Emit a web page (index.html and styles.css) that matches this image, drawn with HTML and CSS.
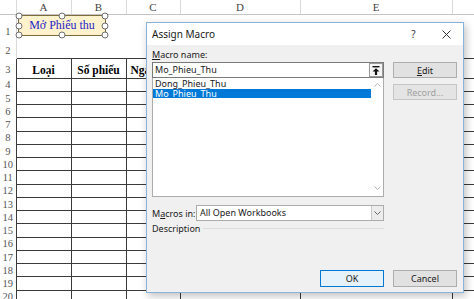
FILE: index.html
```html
<!DOCTYPE html>
<html lang="vi">
<head>
    <meta charset="UTF-8">
    <meta name="viewport" content="width=device-width, initial-scale=1.0">
    <title>Assign Macro</title>
    <link rel="stylesheet" href="styles.css">
</head>
<body>
    <div class="sheet">
        <table class="grid">
            <colgroup>
                <col class="c-rh"><col class="c-a"><col class="c-b"><col class="c-c"><col class="c-d"><col class="c-e"><col class="c-f">
            </colgroup>
            <tr class="col-head"><th></th><th>A</th><th>B</th><th>C</th><th>D</th><th>E</th><th></th></tr>
            <tr class="plain r1"><th class="rh">1</th><td></td><td></td><td></td><td></td><td></td><td></td></tr>
            <tr class="plain r2"><th class="rh">2</th><td></td><td></td><td></td><td></td><td></td><td></td></tr>
            <tr class="data r3"><th class="rh">3</th><td>Loại</td><td>Số phiếu</td><td>Ngày thu</td><td>Nội dung</td><td>Số tiền</td><td></td></tr>
            <!-- các dòng trống của bảng -->
            <tr class="data"><th class="rh">4</th><td></td><td></td><td></td><td></td><td></td><td></td></tr>
            <tr class="data"><th class="rh">5</th><td></td><td></td><td></td><td></td><td></td><td></td></tr>
            <tr class="data"><th class="rh">6</th><td></td><td></td><td></td><td></td><td></td><td></td></tr>
            <tr class="data"><th class="rh">7</th><td></td><td></td><td></td><td></td><td></td><td></td></tr>
            <tr class="data"><th class="rh">8</th><td></td><td></td><td></td><td></td><td></td><td></td></tr>
            <tr class="data"><th class="rh">9</th><td></td><td></td><td></td><td></td><td></td><td></td></tr>
            <tr class="data"><th class="rh">10</th><td></td><td></td><td></td><td></td><td></td><td></td></tr>
            <tr class="data"><th class="rh">11</th><td></td><td></td><td></td><td></td><td></td><td></td></tr>
            <tr class="data"><th class="rh">12</th><td></td><td></td><td></td><td></td><td></td><td></td></tr>
            <tr class="data"><th class="rh">13</th><td></td><td></td><td></td><td></td><td></td><td></td></tr>
            <tr class="data"><th class="rh">14</th><td></td><td></td><td></td><td></td><td></td><td></td></tr>
            <tr class="data"><th class="rh">15</th><td></td><td></td><td></td><td></td><td></td><td></td></tr>
            <tr class="data"><th class="rh">16</th><td></td><td></td><td></td><td></td><td></td><td></td></tr>
            <tr class="data"><th class="rh">17</th><td></td><td></td><td></td><td></td><td></td><td></td></tr>
            <tr class="data"><th class="rh">18</th><td></td><td></td><td></td><td></td><td></td><td></td></tr>
            <tr class="data"><th class="rh">19</th><td></td><td></td><td></td><td></td><td></td><td></td></tr>
            <tr class="data"><th class="rh">20</th><td></td><td></td><td></td><td></td><td></td><td></td></tr>
        </table>

        <!-- nút hình (shape) đang được chọn -->
        <div class="shape">
            Mở Phiếu thu
            <span class="handle h-tl"></span><span class="handle h-tc"></span><span class="handle h-tr"></span>
            <span class="handle h-ml"></span><span class="handle h-mr"></span>
            <span class="handle h-bl"></span><span class="handle h-bc"></span><span class="handle h-br"></span>
        </div>

        <div class="dialog">
            <div class="titlebar">
                <span class="title">Assign Macro</span>
                <span class="tb-btn">?</span>
                <span class="tb-btn">
                    <svg width="9" height="9" viewBox="0 0 9 9"><path d="M0.5 0.5 L8.5 8.5 M8.5 0.5 L0.5 8.5" stroke="#333" stroke-width="1" fill="none"/></svg>
                </span>
            </div>
            <div class="dlg-body">
                <div class="lbl"><u>M</u>acro name:</div>

                <div class="name-area">
                    <div class="name-box">
                        <span class="name-text">Mo_Phieu_Thu</span>
                        <span class="up-btn">
                            <svg width="8" height="9" viewBox="0 0 8 9"><rect x="0.5" y="0" width="7" height="1.4" fill="#111"/><path d="M4 2.2 L7.5 5.6 H5.1 V9 H2.9 V5.6 H0.5 Z" fill="#111"/></svg>
                        </span>
                    </div>
                    <div class="macro-list">
                        <div class="items">
                            <div class="item">Dong_Phieu_Thu</div>
                            <div class="item selected">Mo_Phieu_Thu</div>
                        </div>
                        <div class="scroll">
                            <svg width="7" height="4" viewBox="0 0 7 4"><path d="M0.5 3.5 L3.5 0.5 L6.5 3.5" stroke="#b5b5b5" fill="none"/></svg>
                            <svg width="7" height="4" viewBox="0 0 7 4"><path d="M0.5 0.5 L3.5 3.5 L6.5 0.5" stroke="#b5b5b5" fill="none"/></svg>
                        </div>
                    </div>
                </div>

                <div class="side-btns">
                    <button class="btn"><u>E</u>dit</button>
                    <button class="btn disabled">Record...</button>
                </div>

                <div class="macros-in">
                    <span class="mi-label">M<u>a</u>cros in:</span>
                    <div class="select">
                        <span class="select-text">All Open Workbooks</span>
                        <span class="drop">
                            <svg width="7" height="4" viewBox="0 0 7 4"><path d="M0.5 0.5 L3.5 3.5 L6.5 0.5" stroke="#666" fill="none"/></svg>
                        </span>
                    </div>
                </div>

                <div class="desc">Description</div>

                <button class="btn ok">OK</button>
                <button class="btn cancel">Cancel</button>
            </div>
        </div>
    </div>
</body>
</html>
```

FILE: styles.css
```css
* {
    box-sizing: border-box;
}

body {
    margin: 0;
    width: 474px;
    height: 299px;
    overflow: hidden;
    background-color: #fff;
}

.sheet {
    position: relative;
    width: 474px;
    height: 299px;
    overflow: hidden;
    font-family: "Liberation Serif", serif;
}

/* bảng tính */
.grid {
    border-collapse: collapse;
    table-layout: fixed;
    width: 482px;
}

.c-rh { width: 16px; }
.c-a { width: 55px; }
.c-b { width: 55px; }
.c-c { width: 54px; }
.c-d { width: 120px; }
.c-e { width: 152px; }
.c-f { width: 30px; }

.grid th,
.grid td {
    padding: 0;
}

.col-head th {
    height: 14px;
    font-weight: normal;
    font-size: 11px;
    color: #444;
    border-right: 1px solid #dadada;
    border-bottom: 1px solid #c4c4c4;
    line-height: 12px;
}

.rh {
    font-weight: normal;
    font-size: 10.5px;
    color: #555;
    text-align: center;
    vertical-align: bottom;
    line-height: 12px;
}

.plain .rh {
    border-right: 1px solid #dadada;
}

.data {
    height: 13.25px;
}

.r1 { height: 29px; }
.r2 { height: 15px; }
.data.r3 { height: 20px; }

.r1 .rh { padding-bottom: 5px; }
.r2 .rh { padding-bottom: 1px; }
.r3 .rh { padding-bottom: 2px; }

.data td {
    border: 1px solid #3a3a3a;
}

.r3 td {
    font-weight: bold;
    font-size: 11.5px;
    text-align: center;
    vertical-align: bottom;
    padding-bottom: 2px;
    white-space: nowrap;
    overflow: hidden;
}

/* shape */
.shape {
    position: absolute;
    left: 18px;
    top: 15px;
    width: 88px;
    height: 21px;
    background-color: #fff2cc;
    border: 1px solid #7b6a3e;
    color: #2424c8;
    font-size: 12px;
    display: flex;
    align-items: center;
    justify-content: center;
}

.handle {
    position: absolute;
    width: 7px;
    height: 7px;
    border-radius: 50%;
    background-color: #fff;
    border: 1px solid #6f6f6f;
    transform: translate(-50%, -50%);
}

.h-tl { left: 0; top: 0; }
.h-tc { left: 50%; top: 0; }
.h-tr { left: 100%; top: 0; }
.h-ml { left: 0; top: 50%; }
.h-mr { left: 100%; top: 50%; }
.h-bl { left: 0; top: 100%; }
.h-bc { left: 50%; top: 100%; }
.h-br { left: 100%; top: 100%; }

/* hộp thoại */
.dialog {
    position: absolute;
    left: 146px;
    top: 22px;
    width: 318px;
    height: 271px;
    background-color: #f0f0f0;
    border: 1px solid #8ab2da;
    box-shadow: 2px 3px 8px rgba(0, 0, 0, 0.25);
    display: flex;
    flex-direction: column;
    font-family: "Noto Sans", sans-serif;
    font-size: 9px;
    color: #1a1a1a;
}

.titlebar {
    height: 22px;
    background-color: #fff;
    display: flex;
    align-items: center;
    padding-left: 5px;
    font-size: 10px;
}

.titlebar .title {
    flex: 1;
}

.tb-btn {
    width: 33px;
    display: flex;
    justify-content: center;
    color: #333;
}

.dlg-body {
    flex: 1;
    display: grid;
    grid-template-columns: 232px 64px;
    grid-template-rows: auto auto auto auto 1fr auto;
    column-gap: 9px;
    padding: 4px 6px 5px 5px;
}

.lbl {
    grid-column: 1;
    line-height: 12px;
    height: 12px;
}

.name-area {
    grid-column: 1;
    grid-row: 2;
    margin-top: 1px;
}

.name-box {
    display: flex;
    height: 16px;
    border: 1px solid #7a7a7a;
    background-color: #fff;
}

.name-text {
    flex: 1;
    padding-left: 2px;
    line-height: 14px;
}

.up-btn {
    width: 14px;
    border: 1px solid #9a9a9a;
    background-color: #f4f4f4;
    display: flex;
    align-items: center;
    justify-content: center;
}

.macro-list {
    height: 119px;
    border: 1px solid #acacac;
    border-top: none;
    background-color: #fff;
    display: flex;
}

.items {
    flex: 1;
    padding-top: 1px;
}

.item {
    height: 9.5px;
    line-height: 9.5px;
    padding-left: 2px;
}

.item.selected {
    background-color: #0078d7;
    color: #fff;
}

.scroll {
    width: 12px;
    display: flex;
    flex-direction: column;
    justify-content: space-between;
    align-items: center;
    padding: 5px 0 6px;
}

.side-btns {
    grid-column: 2;
    grid-row: 2;
    margin-top: 1px;
    display: flex;
    flex-direction: column;
    gap: 6px;
    align-self: start;
}

.btn {
    height: 16px;
    padding: 0;
    font-family: "Noto Sans", sans-serif;
    font-size: 9px;
    color: #1a1a1a;
    background-color: #e1e1e1;
    border: 1px solid #adadad;
}

.btn.disabled {
    color: #a0a0a0;
    background-color: #e4e4e4;
    border-color: #c6c6c6;
}

.macros-in {
    grid-column: 1;
    grid-row: 3;
    margin-top: 8px;
    display: flex;
    align-items: center;
}

.mi-label {
    width: 44px;
}

.select {
    flex: 1;
    height: 16px;
    display: flex;
    border: 1px solid #acacac;
    background-color: #fff;
}

.select-text {
    flex: 1;
    padding-left: 3px;
    line-height: 14px;
}

.drop {
    width: 12px;
    border-left: 1px solid #c8c8c8;
    background-color: #ececec;
    display: flex;
    align-items: center;
    justify-content: center;
}

.desc {
    grid-column: 1;
    grid-row: 4;
    margin-top: 2px;
    height: 12px;
    line-height: 12px;
    display: flex;
    align-items: center;
    gap: 3px;
}

.desc::after {
    content: "";
    flex: 1;
    border-top: 1px solid #dcdcdc;
    margin-top: -1px;
}

.ok {
    grid-column: 1;
    grid-row: 6;
    justify-self: end;
    width: 64px;
    height: 17px;
    background-color: #e5f1fb;
    border-color: #0078d7;
}

.cancel {
    grid-column: 2;
    grid-row: 6;
    height: 17px;
}
```
